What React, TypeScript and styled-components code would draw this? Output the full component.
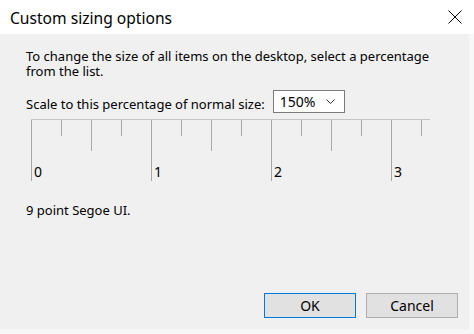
import React from "react";
import styled, { createGlobalStyle } from "styled-components";

const Global = createGlobalStyle`
  html, body { margin: 0; padding: 0; background: #ffffff; }
  body { font-family: "Noto Sans", "Open Sans", sans-serif; color: #000; }
`;

const Window = styled.div`
  width: 474px;
  height: 334px;
  display: flex;
  flex-direction: column;
  overflow: hidden;
  background: #ffffff;
`;

const TitleBar = styled.div`
  height: 34px;
  flex: none;
  display: flex;
  align-items: center;
  justify-content: space-between;
  padding: 0 12px 0 10px;
  background: #ffffff;
`;

const Title = styled.div`
  font-size: 15.6px;
  color: #000;
  margin-top: 2px;
`;

const Body = styled.div`
  flex: 1;
  display: flex;
  flex-direction: column;
  background: #f0f0f0;
  border-right: 5px solid #f7f7f7;
  border-bottom: 5px solid #f7f7f7;
  padding: 15px 11px 11px 26px;
  font-size: 13px;
  line-height: 15px;
`;

const Paragraph = styled.div`
  width: 430px;
`;

const ScaleRow = styled.div`
  display: flex;
  align-items: flex-start;
  margin-top: 11px;
  gap: 8px;
`;

const ScaleLabel = styled.span`
  margin-top: 7px;
`;

const Combo = styled.div`
  width: 72px;
  height: 23px;
  box-sizing: border-box;
  border: 1px solid #7a7a7a;
  background: #fff;
  display: flex;
  align-items: center;
  justify-content: space-between;
  padding: 0 9px 0 6px;
  font-size: 14px;
`;

const Ruler = styled.div`
  margin-top: 6px;
  margin-left: 5px;
  width: 399px;
  border-top: 1px solid #c4c4c4;
  display: grid;
  grid-template-columns: repeat(14, 30px);
  overflow: hidden;
  height: 61px;
`;

const Cell = styled.div`
  display: flex;
  align-items: flex-start;
  height: 61px;
`;

const Tick = styled.div<{ $h: number }>`
  width: 1px;
  height: ${(p) => p.$h}px;
  background: #a8a8a8;
  flex: none;
`;

const TickLabel = styled.span`
  align-self: flex-end;
  margin-left: 2px;
  font-size: 14px;
  line-height: 14px;
  margin-bottom: 2px;
`;

const FontNote = styled.div`
  margin-top: 22px;
`;

const Footer = styled.div`
  margin-top: auto;
  display: flex;
  justify-content: flex-end;
  gap: 10px;
`;

const Button = styled.button<{ $default?: boolean }>`
  width: 92px;
  height: 25px;
  box-sizing: border-box;
  background: #e1e1e1;
  border: 1px solid ${(p) => (p.$default ? "#0078d7" : "#adadad")};
  font-family: "Noto Sans", "Open Sans", sans-serif;
  font-size: 14px;
  color: #000;
  padding: 0;
  display: flex;
  align-items: center;
  justify-content: center;
`;

const ticks = Array.from({ length: 14 }, (_, k) => k);

export default function App() {
  return (
    <>
      <Global />
      <Window>
        <TitleBar>
          <Title>Custom sizing options</Title>
          <svg width="14" height="14" viewBox="0 0 14 14">
            <path d="M0.5 0.5 L13.5 13.5 M13.5 0.5 L0.5 13.5" stroke="#000" strokeWidth="1" fill="none" />
          </svg>
        </TitleBar>
        <Body>
          <Paragraph>
            To change the size of all items on the desktop, select a percentage from the list.
          </Paragraph>
          <ScaleRow>
            <ScaleLabel>Scale to this percentage of normal size:</ScaleLabel>
            <Combo>
              <span>150%</span>
              <svg width="9" height="5" viewBox="0 0 9 5">
                <path d="M0.5 0.5 L4.5 4.5 L8.5 0.5" stroke="#333" strokeWidth="1" fill="none" />
              </svg>
            </Combo>
          </ScaleRow>
          <Ruler>
            {ticks.map((k) => (
              <Cell key={k}>
                <Tick $h={k % 4 === 0 ? 61 : k % 4 === 2 ? 31 : 16} />
                {k % 4 === 0 && <TickLabel>{k / 4}</TickLabel>}
              </Cell>
            ))}
          </Ruler>
          <FontNote>9 point Segoe UI.</FontNote>
          <Footer>
            <Button $default>OK</Button>
            <Button>Cancel</Button>
          </Footer>
        </Body>
      </Window>
    </>
  );
}
